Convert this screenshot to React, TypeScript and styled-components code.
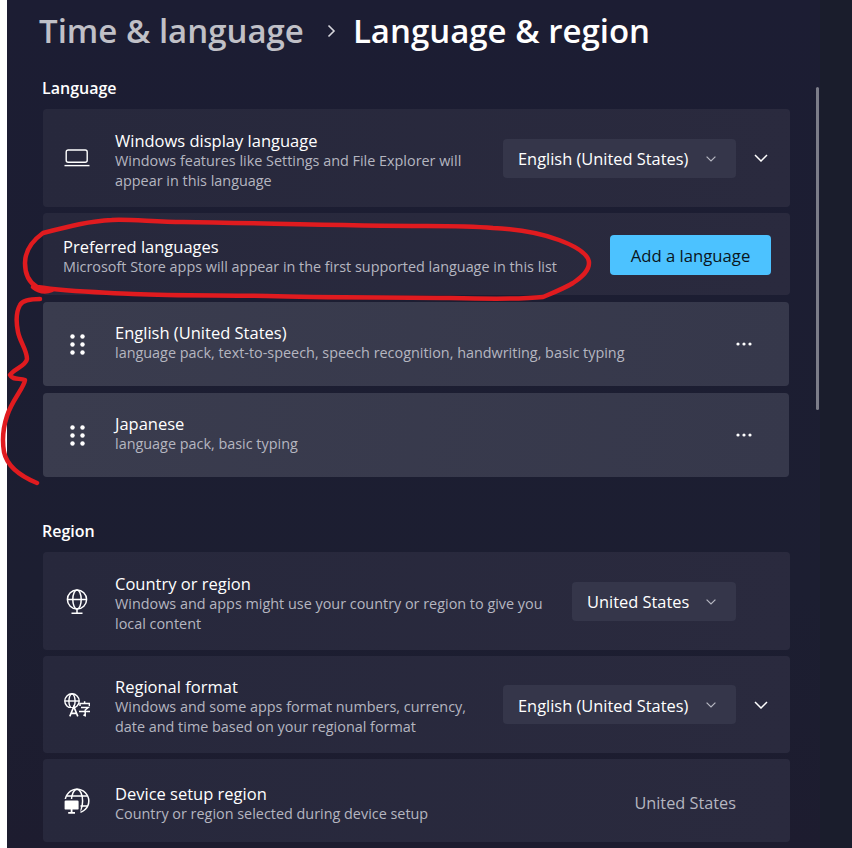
import React from "react";
import styled, { createGlobalStyle } from "styled-components";

const GlobalStyle = createGlobalStyle`
  html, body {
    margin: 0;
    padding: 0;
    background: #ffffff;
    overflow: hidden;
  }
  * { box-sizing: border-box; }
`;

const FONT = `"Open Sans", "Noto Sans", "Liberation Sans", sans-serif`;

export default function App() {
  return (
    <Page>
      <GlobalStyle />
      <Window>
        <Content>
          <Header>
            <Crumb>Time &amp; language</Crumb>
            <CrumbSep viewBox="0 0 12 14">
              <path d="M2.5 1.5 8 7l-5.5 5.5" />
            </CrumbSep>
            <CrumbCurrent>Language &amp; region</CrumbCurrent>
          </Header>

          <SectionTitle>Language</SectionTitle>
          <CardList>
            <Card $height={98} $inset={22}>
              <IconSlot><LaptopIcon /></IconSlot>
              <Texts $shift={2.5}>
                <Name>Windows display language</Name>
                <Sub>
                  Windows features like Settings and File Explorer will
                  <br />
                  appear in this language
                </Sub>
              </Texts>
              <Select $width={233}>
                <SelectLabel>English (United States)</SelectLabel>
                <SmallChevron />
              </Select>
              <Expand><Chevron /></Expand>
            </Card>

            <Card $height={82} $inset={20} $pad={19}>
              <Texts $shift={2.5}>
                <Name>Preferred languages</Name>
                <Sub>Microsoft Store apps will appear in the first supported language in this list</Sub>
              </Texts>
              <AddButton>Add a language</AddButton>
            </Card>
          </CardList>

          <LanguageRows>
            <Card $height={84} $inset={22} $lit $pad={1}>
              <IconSlot><GripIcon /></IconSlot>
              <Texts $shift={-1.5}>
                <Name>English (United States)</Name>
                <Sub>language pack, text-to-speech, speech recognition, handwriting, basic typing</Sub>
              </Texts>
              <More><MoreIcon /></More>
            </Card>
            <Card $height={84} $inset={22} $lit $pad={1}>
              <IconSlot><GripIcon /></IconSlot>
              <Texts $shift={-1.5}>
                <Name>Japanese</Name>
                <Sub>language pack, basic typing</Sub>
              </Texts>
              <More><MoreIcon /></More>
            </Card>
          </LanguageRows>

          <RegionTitle>Region</RegionTitle>
          <CardList>
            <Card $height={98} $inset={22}>
              <IconSlot><GlobeIcon /></IconSlot>
              <Texts $shift={2.5}>
                <Name>Country or region</Name>
                <Sub>
                  Windows and apps might use your country or region to give you
                  <br />
                  local content
                </Sub>
              </Texts>
              <Select $width={164} $end={54}>
                <SelectLabel>United States</SelectLabel>
                <SmallChevron />
              </Select>
            </Card>
            <Card $height={97} $inset={22}>
              <IconSlot><RegionalIcon /></IconSlot>
              <Texts $shift={2}>
                <Name>Regional format</Name>
                <Sub>
                  Windows and some apps format numbers, currency,
                  <br />
                  date and time based on your regional format
                </Sub>
              </Texts>
              <Select $width={233}>
                <SelectLabel>English (United States)</SelectLabel>
                <SmallChevron />
              </Select>
              <Expand><Chevron /></Expand>
            </Card>
            <Card $height={83} $inset={22}>
              <IconSlot><DeviceRegionIcon /></IconSlot>
              <Texts $shift={3}>
                <Name>Device setup region</Name>
                <Sub>Country or region selected during device setup</Sub>
              </Texts>
              <PlainValue>United States</PlainValue>
            </Card>
          </CardList>
        </Content>
        <Gutter />
        <ScrollThumb />
      </Window>
      <InkLayer viewBox="0 0 852 848">
        <path d="M112 220C90 221 70 226 43 233C32 241 25 252 25 263C25 275 30 283 37 287C70 292 100 292 133 294C180 296 225 295 267 296C330 298 390 297 450 298C490 299 525 299 543 297C555 292 565 288 573 283C582 277 589 271 589 263C589 254 575 246 559 240C540 233 515 229 493 228C470 226 450 226 426 226C345 226 260 223 183 222C155 222 130 219 112 220" />
        <path d="M33 287C38 291 45 293 52 290" />
        <path d="M40 299C30 299 22 301 20 305C16 312 16 322 18 332C20 342 27 350 27 359C26 366 14 369 10 375C12 380 20 378 25 380C24 388 12 400 7 416C3 428 2 440 4 452C7 466 20 476 37 483" />
      </InkLayer>
    </Page>
  );
}

function LaptopIcon() {
  return (
    <Glyph viewBox="0 0 26 18" $w={26} $h={18} fill="none" stroke="#ffffff" strokeWidth="1.4">
      <rect x="2.2" y="1" width="21" height="12.2" rx="2" />
      <path d="M.5 16.6h25" />
    </Glyph>
  );
}

function GripIcon() {
  return (
    <Glyph viewBox="0 0 15 21" $w={15} $h={21} fill="#ffffff" stroke="none">
      <circle cx="2.5" cy="2.5" r="2.2" />
      <circle cx="12.5" cy="2.5" r="2.2" />
      <circle cx="2.5" cy="10.5" r="2.2" />
      <circle cx="12.5" cy="10.5" r="2.2" />
      <circle cx="2.5" cy="18.5" r="2.2" />
      <circle cx="12.5" cy="18.5" r="2.2" />
    </Glyph>
  );
}

function GlobeIcon() {
  return (
    <Glyph viewBox="0 0 24 25" $w={24} $h={25} fill="none" stroke="#ffffff" strokeWidth="1.5">
      <circle cx="12" cy="10.5" r="9.6" />
      <ellipse cx="12" cy="10.5" rx="4.2" ry="9.6" />
      <path d="M2.4 10.5h19.2M12 20v4M6.5 24.2h11" />
    </Glyph>
  );
}

function RegionalIcon() {
  return (
    <Glyph viewBox="0 0 26 24" $w={26} $h={24} fill="none" stroke="#ffffff" strokeWidth="1.4">
      <circle cx="8" cy="8" r="7.2" />
      <ellipse cx="8" cy="8" rx="3.1" ry="7.2" />
      <path d="M.8 8h14.4" />
      <path d="M4 15h12v9H4z" fill="#29293d" stroke="none" />
      <path d="M5.8 23.4 9.8 13.6l4 9.8M7.2 20.4h5.2" strokeWidth="1.6" />
      <path d="M20.6 8.2v2.2M16 13v-2.4h9.4V13M17 14.6h7.2l-3 2.4v5.6l-1.8-.6M15 18.4h11" strokeWidth="1.5" />
    </Glyph>
  );
}

function DeviceRegionIcon() {
  return (
    <Glyph viewBox="0 0 26 26" $w={26} $h={26} fill="none" stroke="#ffffff" strokeWidth="1.5">
      <circle cx="13" cy="13" r="11.8" />
      <ellipse cx="13" cy="13" rx="5.6" ry="11.8" />
      <path d="M2.6 8h20.8M15 18h9" />
      <rect x="-1" y="11" width="17.5" height="15" fill="#29293d" stroke="none" />
      <rect x=".6" y="12.6" width="14" height="9" rx="1.2" fill="#ffffff" stroke="none" />
      <path d="M7.6 21v3.4M4.2 24.8h6.8" strokeWidth="1.8" />
    </Glyph>
  );
}

function MoreIcon() {
  return (
    <Glyph viewBox="0 0 16 4" $w={16} $h={4} fill="#ffffff" stroke="none">
      <circle cx="2" cy="2" r="1.6" />
      <circle cx="8" cy="2" r="1.6" />
      <circle cx="14" cy="2" r="1.6" />
    </Glyph>
  );
}

function Chevron() {
  return (
    <Glyph viewBox="0 0 14 8" $w={14} $h={8} fill="none" stroke="#ffffff" strokeWidth="1.5">
      <path d="M1 1l6 6 6-6" />
    </Glyph>
  );
}

function SmallChevron() {
  return (
    <SelectChevron viewBox="0 0 10 6" fill="none" stroke="#b7b8c2" strokeWidth="1.2">
      <path d="M.6.6 5 5 9.4.6" />
    </SelectChevron>
  );
}

const Page = styled.div`
  position: relative;
  width: 852px;
  height: 848px;
  overflow: hidden;
  padding-left: 7px;
  background: #ffffff;
  font-family: ${FONT};
`;

const Window = styled.div`
  position: relative;
  display: flex;
  height: 848px;
  background: #1c1d32;
`;

const Content = styled.main`
  width: 813px;
  padding-left: 36px;
  background: linear-gradient(180deg, #1c1d33 0%, #1c1e31 70%, #1d1c2f 100%);
`;

const Gutter = styled.div`
  flex: 1;
  background: #1a1d2c;
`;

const ScrollThumb = styled.div`
  position: absolute;
  left: 809px;
  top: 87px;
  width: 3px;
  height: 323px;
  border-radius: 2px;
  background: #7c7d89;
`;

const Header = styled.header`
  display: flex;
  align-items: center;
  height: 62px;
  margin-left: -4px;
  padding-bottom: 2px;
  font-size: 33px;
  font-weight: 600;
`;

const Crumb = styled.span`
  color: #c0c0c7;
`;

const CrumbSep = styled.svg`
  width: 12px;
  height: 14px;
  margin: 2px 15px 0 22px;
  fill: none;
  stroke: #d6d6dc;
  stroke-width: 1.6;
`;

const CrumbCurrent = styled.span`
  color: #ffffff;
`;

const SectionTitle = styled.h2`
  height: 47px;
  margin: 0 0 0 -1px;
  padding-top: 15px;
  color: #ffffff;
  font-size: 16px;
  line-height: 22px;
  font-weight: 600;
`;

const RegionTitle = styled(SectionTitle)`
  height: 75px;
  padding-top: 43px;
`;

const CardList = styled.div`
  display: flex;
  flex-direction: column;
  gap: 6px;
`;

const LanguageRows = styled.div`
  display: flex;
  flex-direction: column;
  gap: 7px;
  margin-top: 7px;
`;

const Card = styled.section<{ $height: number; $inset: number; $lit?: boolean; $pad?: number }>`
  display: flex;
  align-items: center;
  width: ${(p) => 747 - (p.$lit ? 1 : 0)}px;
  height: ${(p) => p.$height}px;
  padding-left: ${(p) => p.$inset}px;
  padding-right: ${(p) => p.$pad ?? 0}px;
  border-radius: 4px;
  background: ${(p) =>
    p.$lit
      ? "linear-gradient(100deg, #3a3c4e 0%, #36384b 100%)"
      : "linear-gradient(100deg, #27283c 0%, #2a2a3e 100%)"};
`;

const IconSlot = styled.div`
  display: flex;
  align-items: center;
  justify-content: center;
  flex: none;
  width: 24px;
  margin-right: 26px;
`;

const Glyph = styled.svg<{ $w: number; $h: number }>`
  display: block;
  flex: none;
  overflow: hidden;
  width: ${(p) => p.$w}px;
  height: ${(p) => p.$h}px;
`;

const Texts = styled.div<{ $shift: number }>`
  flex: 1;
  min-width: 0;
  margin-top: ${(p) => p.$shift * 2}px;
  white-space: nowrap;
`;

const Name = styled.div`
  color: #ffffff;
  font-size: 16.5px;
  line-height: 21px;
`;

const Sub = styled.div`
  color: #b5b6c0;
  font-size: 14.4px;
  line-height: 20px;
`;

const Select = styled.div<{ $width: number; $end?: number }>`
  display: flex;
  align-items: center;
  justify-content: space-between;
  flex: none;
  width: ${(p) => p.$width}px;
  height: 39px;
  margin-right: ${(p) => p.$end ?? 0}px;
  padding: 0 20px 0 15px;
  border-radius: 4px;
  background: #35364a;
`;

const SelectLabel = styled.span`
  padding-top: 1px;
  color: #ffffff;
  font-size: 16.4px;
`;

const SelectChevron = styled.svg`
  flex: none;
  margin-top: 1px;
  width: 10px;
  height: 6px;
`;

const Expand = styled.div`
  display: flex;
  align-items: center;
  justify-content: center;
  flex: none;
  width: 54px;
  padding-right: 4px;
`;

const AddButton = styled.button`
  flex: none;
  width: 161px;
  height: 40px;
  margin-top: 2px;
  padding: 0;
  border: 0;
  border-radius: 4px;
  background: #4cc2ff;
  color: #0a1520;
  font-family: inherit;
  font-size: 16.7px;
`;

const More = styled.div`
  display: flex;
  align-items: center;
  justify-content: center;
  flex: none;
  width: 88px;
`;

const PlainValue = styled.div`
  flex: none;
  margin-top: 4px;
  margin-right: 54px;
  color: #b5b6c0;
  font-size: 16.3px;
`;

const InkLayer = styled.svg`
  position: absolute;
  inset: 0;
  width: 852px;
  height: 848px;
  fill: none;
  stroke: #e01b1f;
  stroke-width: 4.5;
  stroke-linecap: round;
  stroke-linejoin: round;
  pointer-events: none;
`;
